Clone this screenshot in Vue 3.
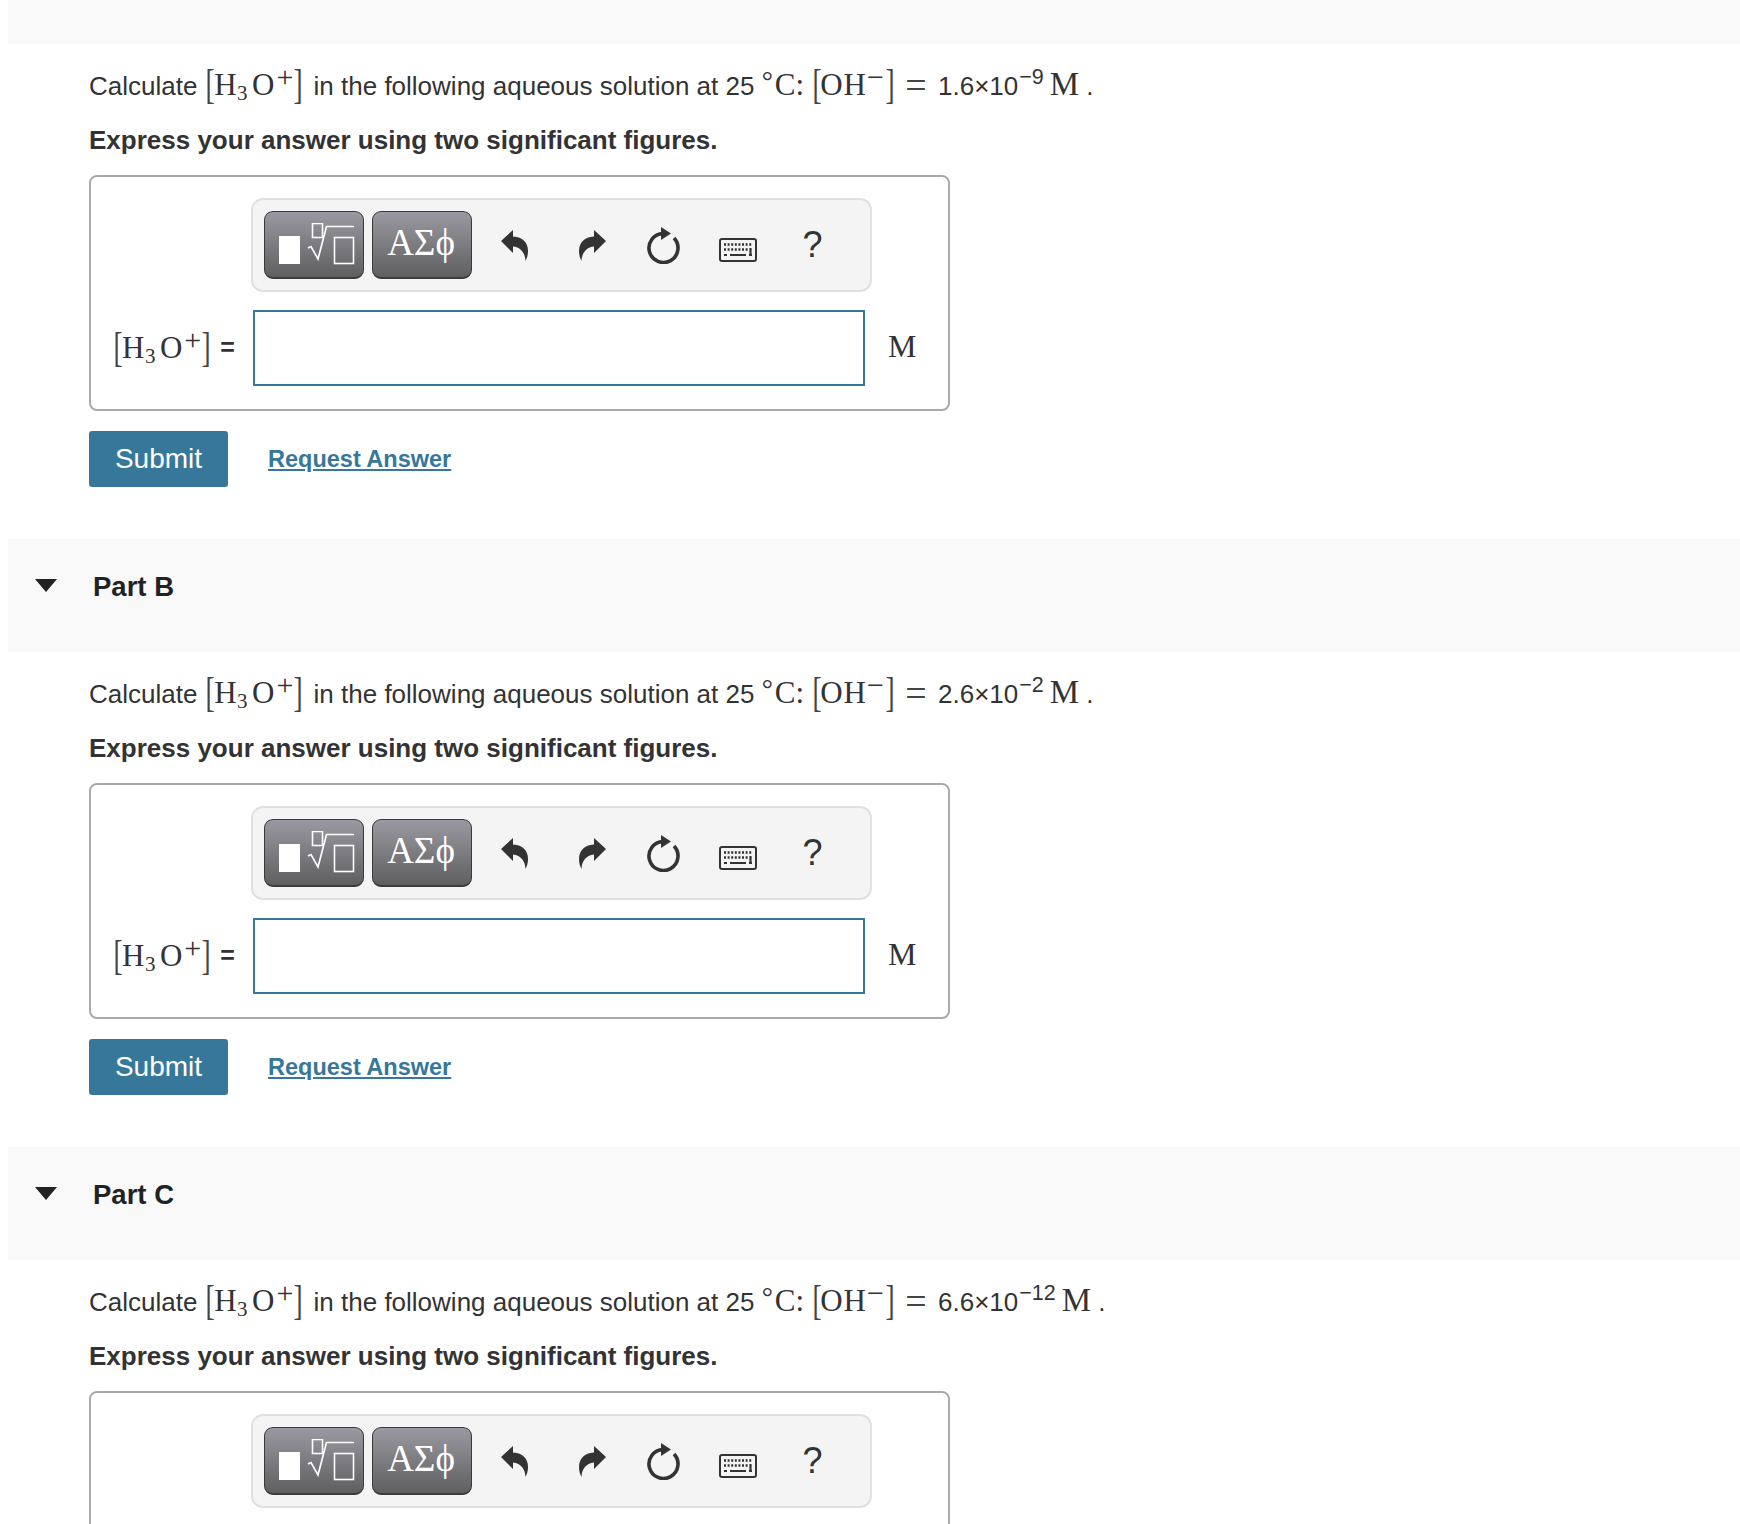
<script setup>
const parts = [
  { name: null, value: '1.6', exp: '−9' },
  { name: 'Part B', value: '2.6', exp: '−2' },
  { name: 'Part C', value: '6.6', exp: '−12' }
]
</script>

<template>
  <div class="page">
    <section v-for="part in parts" :key="part.value" class="part">
      <header class="part-head" :class="{ first: !part.name }">
        <template v-if="part.name">
          <span class="caret"></span>
          <h2>{{ part.name }}</h2>
        </template>
      </header>

      <div class="content">
        <p class="question">
          Calculate
          <span class="math ion ion-q"><span class="br">[</span><span class="h">H</span><sub>3</sub><span class="o">O</span><sup>+</sup><span class="br close">]</span></span>
          in the following aqueous solution at 25
          <span class="math tail"><span class="deg">°</span><span class="c">C:</span><span class="br open2">[</span><span class="oh">OH</span><sup class="minus">−</sup><span class="br close2">]</span><span class="eq">=</span></span>
          {{ part.value }}×10<sup class="exp">{{ part.exp }}</sup>
          <span class="math unit">M</span>
          .
        </p>
        <p class="hint">Express your answer using two significant figures.</p>

        <div class="answer-box">
          <div class="toolbar">
            <button class="tpl-btn" type="button">
              <svg width="76" height="44" viewBox="0 0 76 44">
                <rect x="0" y="13" width="21" height="28" fill="#fff" />
                <rect x="33.5" y="0.5" width="10" height="14" fill="none" stroke="#fff" stroke-width="1.6" />
                <path d="M29 25 L32 23.5 L39 36 L47.5 3.5 H75" fill="none" stroke="#fff" stroke-width="1.7" />
                <rect x="55.5" y="14.5" width="19" height="26" fill="none" stroke="#fff" stroke-width="1.6" />
              </svg>
            </button>
            <button class="tpl-btn greek" type="button">ΑΣϕ</button>

            <span class="tool undo">
              <svg width="27" height="31" viewBox="0 0 27 31">
                <path d="M0 11 L12 0 V6.5 C22 7 27 13 27 21 C27 25 26 28 24.5 31 C24.5 24 20 17 12 16.5 V23 Z" fill="#333" />
              </svg>
            </span>
            <span class="tool redo">
              <svg width="27" height="31" viewBox="0 0 27 31">
                <path d="M27 11 L15 0 V6.5 C5 7 0 13 0 21 C0 25 1 28 2.5 31 C2.5 24 7 17 15 16.5 V23 Z" fill="#333" />
              </svg>
            </span>
            <span class="tool">
              <svg width="34" height="37" viewBox="0 0 34 37">
                <path d="M28 11 A14.5 14.5 0 1 1 17 6.5" fill="none" stroke="#333" stroke-width="3.6" />
                <path d="M15 0 L25 6.5 L15 13 Z" fill="#333" />
              </svg>
            </span>
            <span class="tool keys">
              <svg width="38" height="24" viewBox="0 0 38 24">
                <rect x="1" y="1" width="36" height="22" rx="2" fill="none" stroke="#333" stroke-width="2" />
                <path d="M5 6.5 H33" stroke="#333" stroke-width="2.4" stroke-dasharray="2 1.6" />
                <path d="M5 11.5 H30" stroke="#333" stroke-width="2.4" stroke-dasharray="2 1.6" />
                <path d="M5 17 H8 M11 17 H27 M30 17 H33 M31.5 10 V17" stroke="#333" stroke-width="2.2" fill="none" />
              </svg>
            </span>
            <span class="tool help">?</span>
          </div>

          <div class="answer-row">
            <label class="answer-label">
              <span class="math ion"><span class="br">[</span><span class="h">H</span><sub>3</sub><span class="o">O</span><sup>+</sup><span class="br close">]</span></span>
              <span class="equals">=</span>
            </label>
            <input class="answer-input" type="text" />
            <span class="answer-unit">M</span>
          </div>
        </div>

        <div class="actions">
          <button class="submit" type="button">Submit</button>
          <a class="request" href="#">Request Answer</a>
        </div>
      </div>
    </section>
  </div>
</template>

<style>
body {
  background: #fff;
}
</style>

<style scoped>
.page {
  height: 1524px;
  overflow: hidden;
  font-family: "Liberation Sans", Arial, sans-serif;
  color: #333;
}

.part-head {
  display: flex;
  align-items: center;
  height: 113px;
  margin-left: 8px;
  padding: 0 0 17px 27px;
  box-sizing: border-box;
  background: #f9f9f9;
}

.part-head.first {
  height: 44px;
  padding: 0;
}

.part-head h2 {
  margin: 0 0 0 36px;
  font-size: 27.5px;
  font-weight: 700;
  color: #222;
}

.caret {
  width: 0;
  height: 0;
  margin-bottom: 4px;
  border-left: 11px solid transparent;
  border-right: 11px solid transparent;
  border-top: 13px solid #222;
}

.content {
  padding: 20px 0 52px 89px;
}

.question {
  margin: 0;
  height: 40px;
  line-height: 40px;
  font-size: 26px;
  white-space: nowrap;
}

.hint {
  margin: 21px 0 0;
  height: 30px;
  line-height: 30px;
  font-size: 26px;
  font-weight: 700;
}

.math {
  font-family: "Liberation Serif", "Times New Roman", serif;
  font-size: 31px;
}

.ion-q {
  margin-left: 2px;
  margin-right: 5px;
}

/* tall thin brackets: glyph squeezed sideways */
.br {
  display: inline-block;
  width: 14px;
  margin: 0 -4px;
  font-size: 42px;
  line-height: 0;
  vertical-align: -3px;
  color: #444;
  transform: scaleX(0.65);
}

.h {
  margin-left: 1.5px;
}

.math sub {
  font-size: 21px;
  line-height: 0;
  vertical-align: -5px;
  margin-left: 0.5px;
}

.math sup {
  font-size: 30px;
  line-height: 0;
  vertical-align: 8px;
  margin-left: 2px;
}

.o {
  margin-left: 4.5px;
}

.close {
  margin-left: -2px;
}

.deg {
  font-size: 28px;
  line-height: 0;
  vertical-align: 5px;
}

.c {
  margin-left: 2px;
}

.open2 {
  margin-left: 5.5px;
}

.oh {
  margin-left: 0.5px;
  letter-spacing: 1px;
}

.math .minus {
  margin-left: 0;
}

.close2 {
  margin-left: -0.5px;
}

.eq {
  margin-left: 12px;
  margin-right: 4px;
  font-size: 38px;
  line-height: 0;
  font-weight: 400;
  vertical-align: -3px;
  color: #444;
}

.exp {
  margin-left: 1px;
  font-size: 21.5px;
  line-height: 0;
  vertical-align: 11px;
}

.unit {
  margin-left: 6px;
  font-size: 33px;
}

.answer-box {
  box-sizing: border-box;
  width: 861px;
  height: 236px;
  margin-top: 20px;
  padding: 21px 0 0 160px;
  border: 2px solid #aaa;
  border-radius: 8px;
}

.toolbar {
  display: flex;
  align-items: center;
  box-sizing: border-box;
  width: 621px;
  height: 94px;
  padding-left: 11px;
  background: #f4f4f4;
  border: 2px solid #e0e0e0;
  border-radius: 12px;
}

.tpl-btn {
  display: flex;
  align-items: flex-start;
  justify-content: center;
  box-sizing: border-box;
  width: 100px;
  height: 68px;
  margin-right: 8px;
  padding: 11px 0 0 6px;
  border: 1px solid #3a3a3a;
  border-bottom-width: 2px;
  border-radius: 9px;
  background: linear-gradient(#9a99a1, #5f5f60);
}

.tpl-btn.greek {
  margin-right: 0;
  padding: 10px 2px 0 0;
  font-family: "Liberation Serif", "Times New Roman", serif;
  font-size: 37px;
  line-height: 42px;
  color: #fff;
}

.tool {
  display: flex;
  align-items: center;
  justify-content: center;
  width: 75px;
}

.undo {
  margin-left: 5px;
}

.redo {
  padding-left: 3px;
  margin-right: -5px;
}

.keys {
  padding-top: 10px;
}

.help {
  font-size: 36px;
  line-height: 40px;
}

.answer-row {
  display: flex;
  align-items: center;
  width: 858px;
  margin: 18px 0 0 -160px;
}

.answer-label {
  display: flex;
  align-items: center;
  box-sizing: border-box;
  width: 162px;
  padding: 0 0 1px 23.5px;
}

.equals {
  margin-left: 11px;
  font-size: 25px;
  font-weight: 700;
}

.answer-input {
  box-sizing: border-box;
  width: 612px;
  height: 76px;
  border: 2px solid #37789a;
  border-radius: 0;
  outline: none;
  background: #fff;
}

.answer-unit {
  margin: 0 0 3px 23px;
  font-family: "Liberation Serif", "Times New Roman", serif;
  font-size: 32px;
}

.actions {
  display: flex;
  align-items: center;
  margin-top: 20px;
}

.submit {
  width: 139px;
  height: 56px;
  padding: 0;
  border: none;
  border-radius: 3px;
  background: #37789a;
  color: #fff;
  font-family: inherit;
  font-size: 28px;
}

.request {
  margin-left: 40px;
  color: #37789a;
  font-size: 23.5px;
  font-weight: 700;
}
</style>
